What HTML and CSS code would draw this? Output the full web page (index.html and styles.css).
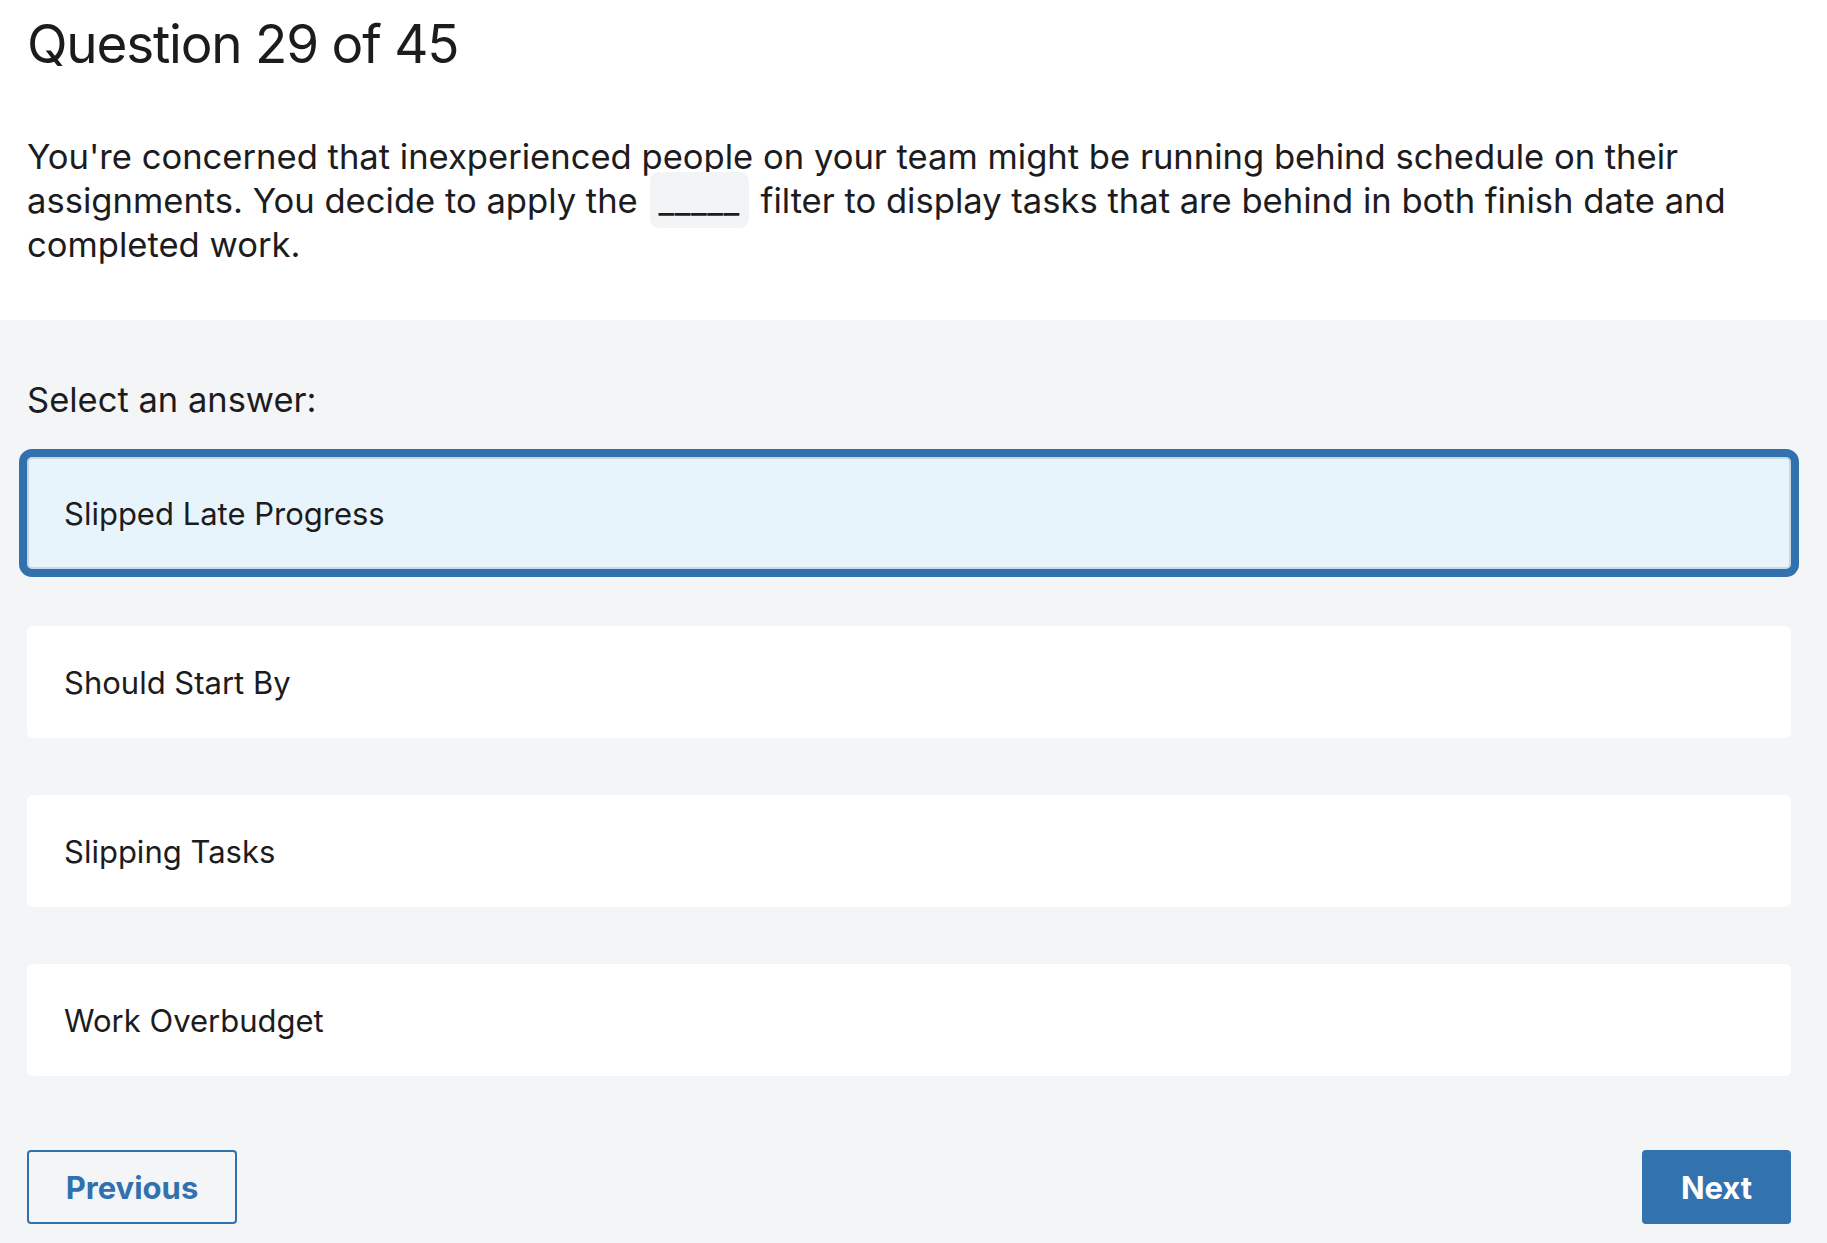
FILE: index.html
```html
<!DOCTYPE html>
<html lang="en">
<head>
<meta charset="utf-8">
<title>Question 29 of 45</title>
<link rel="stylesheet" href="styles.css">
</head>
<body>
<header class="question">
  <h1 class="question-title">Question 29 of 45</h1>
  <p class="question-text">You're concerned that inexperienced people on your team might be running behind schedule on their assignments. You decide to apply the <span class="blank">_____</span> filter to display tasks that are behind in both finish date and completed work.</p>
</header>
<main class="answers">
  <div class="answers-label">Select an answer:</div>
  <div class="options">
    <div class="option selected">Slipped Late Progress</div>
    <div class="option">Should Start By</div>
    <div class="option">Slipping Tasks</div>
    <div class="option">Work Overbudget</div>
  </div>
  <div class="nav">
    <button class="btn btn-outline">Previous</button>
    <button class="btn btn-primary">Next</button>
  </div>
</main>
</body>
</html>
```

FILE: styles.css
```css
html, body {
  margin: 0;
  padding: 0;
}
body {
  font-family: Inter, "Noto Sans", sans-serif;
  color: #1c1c1e;
  background: #f4f5f7;
  min-height: 1243px;
}
.question {
  background: #ffffff;
  padding: 14px 36px 0 27px;
  height: 306px;
}
.question-title {
  margin: 0;
  font-size: 53px;
  font-weight: 400;
  line-height: 60px;
  letter-spacing: -1.2px;
}
.question-text {
  margin: 60px 0 0;
  font-size: 34.6px;
  line-height: 44px;
}
.blank {
  background: #f3f4f6;
  border-radius: 9px;
  padding: 7px 9px;
  margin: 0 2px;
  letter-spacing: 0.5px;
}
.answers {
  padding: 58px 36px 0 27px;
}
.answers-label {
  font-size: 34.5px;
  line-height: 44px;
  margin-bottom: 35px;
}
.options {
  display: flex;
  flex-direction: column;
  gap: 57px;
}
.option {
  height: 112px;
  box-sizing: border-box;
  background: #ffffff;
  border-radius: 6px;
  padding-left: 37px;
  display: flex;
  align-items: center;
  font-size: 31px;
}
.option.selected {
  background: #e8f4fc;
  border: 2px solid #c8d7e4;
  padding-left: 35px;
  outline: 8px solid #3171ad;
  outline-offset: 0;
  border-radius: 5px;
}
.nav {
  display: flex;
  justify-content: space-between;
  margin-top: 74px;
}
.btn {
  font-family: Inter, "Noto Sans", sans-serif;
  font-size: 31px;
  font-weight: 700;
  height: 74px;
  border-radius: 4px;
  cursor: pointer;
}
.btn-outline {
  width: 210px;
  background: transparent;
  border: 2px solid #3171ad;
  color: #3171ad;
}
.btn-primary {
  width: 149px;
  background: #3272ae;
  border: none;
  color: #ffffff;
}
```
